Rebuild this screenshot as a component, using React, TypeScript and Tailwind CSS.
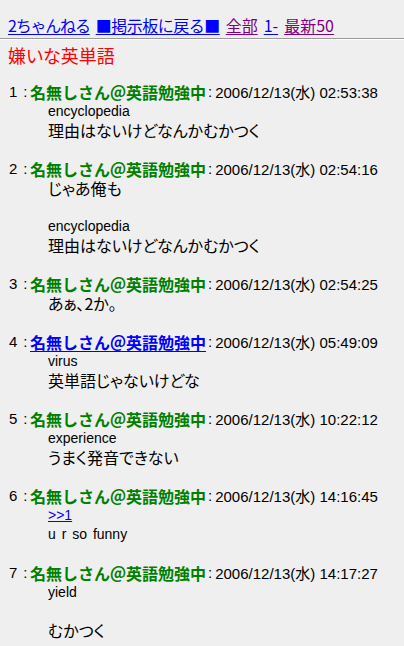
import React from "react";

type Line = { t: string; en?: boolean; link?: boolean };
type Post = { n: number; time: string; nameLink?: boolean; lines: Line[] };

const posts: Post[] = [
  { n: 1, time: "02:53:38", lines: [{ t: "encyclopedia", en: true }, { t: "理由はないけどなんかむかつく" }] },
  {
    n: 2,
    time: "02:54:16",
    lines: [{ t: "じゃあ俺も" }, { t: "" }, { t: "encyclopedia", en: true }, { t: "理由はないけどなんかむかつく" }],
  },
  { n: 3, time: "02:54:25", lines: [{ t: "あぁ、2か。" }] },
  { n: 4, time: "05:49:09", nameLink: true, lines: [{ t: "virus", en: true }, { t: "英単語じゃないけどな" }] },
  { n: 5, time: "10:22:12", lines: [{ t: "experience", en: true }, { t: "うまく発音できない" }] },
  { n: 6, time: "14:16:45", lines: [{ t: ">>1", en: true, link: true }, { t: "u r so funny", en: true }] },
  { n: 7, time: "14:17:27", lines: [{ t: "yield", en: true }, { t: "" }, { t: "むかつく" }] },
];

const jp = "font-['Noto_Sans_CJK_JP',sans-serif] [font-feature-settings:'palt']";
const jpn = "font-['Noto_Sans_CJK_JP',sans-serif]";
const lat = "font-['Liberation_Sans','Noto_Sans_CJK_JP',sans-serif]";

export default function App() {
  return (
    <div className="min-h-[646px] w-[404px] bg-[#efefef] px-[8px] pt-[15px] text-black overflow-hidden">
      <div className={`flex h-[20px] items-center whitespace-nowrap text-[16px] leading-[20px] ${jpn}`}>
        <a className="tracking-[-1.2px] text-[#0000ff] underline underline-offset-2">2ちゃんねる</a>
        <a className="ml-[6px] tracking-[-0.5px] text-[#0000ff] underline underline-offset-2">■掲示板に戻る■</a>
        <a className="ml-[6px] text-[#800080] underline underline-offset-2">全部</a>
        <a className="ml-[6px] text-[#0000ff] underline underline-offset-2">1-</a>
        <a className="ml-[6px] text-[#800080] underline underline-offset-2">最新50</a>
      </div>
      <div className="-mx-[8px] mt-[3px] h-[2px] border-t border-[#999999] border-b-[#ffffff] border-b" />
      <div className={`mt-[4px] h-[22px] text-[18px] leading-[22px] text-[#ff0000] ${jp}`}>嫌いな英単語</div>
      <div className="mt-[16px]">
        {posts.map((p) => (
          <div key={p.n}>
            <div className="flex h-[20px] items-center whitespace-nowrap leading-[20px]">
              <span className={`w-[22px] text-[15px] ${lat}`}>
                <span className="ml-[1px]">{p.n}</span>
                <span className="ml-[6px]">:</span>
              </span>
              {p.nameLink ? (
                <a className={`text-[16px] font-bold text-[#0000ff] underline underline-offset-2 ${jpn}`}>
                  名無しさん＠英語勉強中
                </a>
              ) : (
                <span className={`text-[16px] font-bold text-[#008000] ${jpn}`}>名無しさん＠英語勉強中</span>
              )}
              <span className={`ml-[2px] text-[15px] ${lat}`}>:</span>
              <span className={`ml-[3px] text-[15px] ${lat}`}>
                2006/12/13(<span className={jpn}>水</span>) {p.time}
              </span>
            </div>
            <div className="pl-[40px]">
              {p.lines.map((l, i) =>
                l.t === "" ? (
                  <div key={i} className="h-[19px]" />
                ) : l.link ? (
                  <div key={i} className={`h-[19px] text-[14px] leading-[19px] ${lat}`}>
                    <a className="text-[#0000ff] underline">{l.t}</a>
                  </div>
                ) : l.en ? (
                  <div key={i} className={`h-[19px] text-[14px] leading-[19px] [word-spacing:2px] ${lat}`}>
                    {l.t}
                  </div>
                ) : (
                  <div key={i} className={`h-[19px] text-[16px] leading-[19px] ${jp}`}>
                    {l.t}
                  </div>
                )
              )}
              <div className="h-[19px]" />
            </div>
          </div>
        ))}
      </div>
    </div>
  );
}
